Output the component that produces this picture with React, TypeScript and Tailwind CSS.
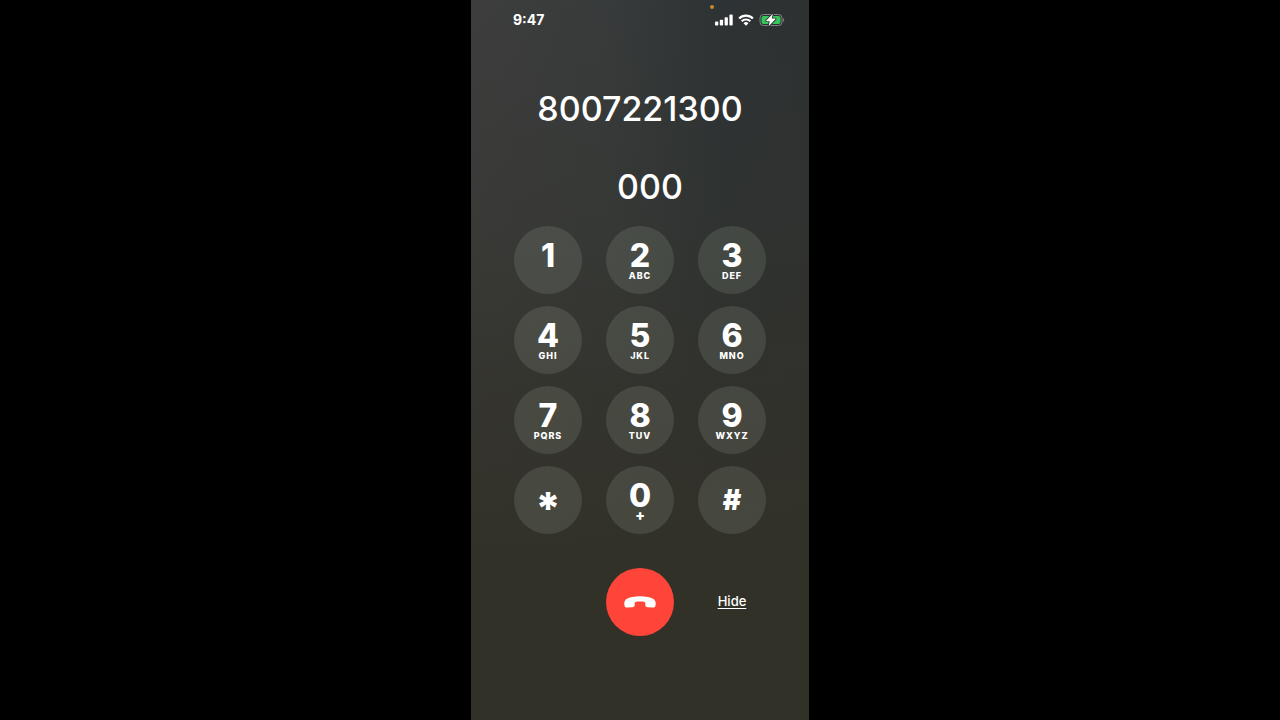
const keys = [
  { digit: "1", letters: "" },
  { digit: "2", letters: "ABC" },
  { digit: "3", letters: "DEF" },
  { digit: "4", letters: "GHI" },
  { digit: "5", letters: "JKL" },
  { digit: "6", letters: "MNO" },
  { digit: "7", letters: "PQRS" },
  { digit: "8", letters: "TUV" },
  { digit: "9", letters: "WXYZ" },
  { digit: "*", letters: "" },
  { digit: "0", letters: "+" },
  { digit: "#", letters: "" },
];

function SignalIcon() {
  return (
    <svg width="18" height="12" viewBox="0 0 18 12" fill="white" aria-hidden="true">
      <rect x="0" y="7.5" width="3.3" height="4" rx="0.9" />
      <rect x="4.8" y="5.7" width="3.3" height="5.8" rx="0.9" />
      <rect x="9.6" y="3.2" width="3.3" height="8.3" rx="0.9" />
      <rect x="14.4" y="0.5" width="3.3" height="11" rx="0.9" />
    </svg>
  );
}

function WifiIcon() {
  return (
    <svg width="16" height="12" viewBox="0 0 16 12" fill="none" stroke="white" aria-hidden="true">
      <path d="M1.1 4.5a9.8 9.8 0 0 1 13.800 0" strokeWidth="2.300" />
      <path d="M3.7 7.300a6.1 6.1 0 0 1 8.600 0" strokeWidth="2.100" />
      <path d="M8 11.700 5.500 9.200a3.500 3.500 0 0 1 5 0Z" fill="white" stroke="none" />
    </svg>
  );
}

function BatteryIcon() {
  return (
    <svg width="26" height="14" viewBox="0 0 26 14" aria-hidden="true">
      <rect x="1" y="1.5" width="22" height="11" rx="3.4" fill="none" stroke="#7d8180" />
      <rect x="2.5" y="3" width="19" height="8" rx="2" fill="#35c759" />
      <path d="M24 5.2v3.600c.8-.3 1.200-1 1.200-1.800s-.4-1.500-1.200-1.800Z" fill="#7d8180" />
      <path
        d="M13.900.8 7.300 7.500c-.3.3-.1.700.3.700h3.200L9.600 13.200l6.800-6.900c.3-.3.1-.7-.3-.7h-3.400Z"
        fill="white"
        stroke="#2f3335"
        strokeWidth="1.800"
        paintOrder="stroke"
      />
    </svg>
  );
}

function HangUpIcon() {
  return (
    <svg width="32" height="14" viewBox="0 0 32 14" fill="white" aria-hidden="true">
      <path d="M16 1.200c5.500 0 10.600.8 13.400 2.700 1.900 1.300 2.500 3.200 2.300 5.500-.2 2.200-1.200 3.300-3 3.200l-5-.4c-1.600-.1-2.300-.8-2.400-2.200l-.1-2.200c0-.5-.3-.7-.7-.8-1.300-.3-2.900-.4-4.500-.4s-3.200.1-4.500.4c-.4.1-.7.3-.7.800l-.1 2.200c-.1 1.400-.8 2.100-2.400 2.200l-5 .4c-1.800.1-2.800-1-3-3.200-.2-2.300.4-4.200 2.300-5.500C5.400 2 10.500 1.200 16 1.200Z" />
    </svg>
  );
}

export default function App() {
  return (
    <div className="flex min-h-screen justify-center bg-black font-['Inter',sans-serif] text-white">
      <main className="flex w-full max-w-[338px] flex-col bg-[linear-gradient(to_bottom,transparent_0%,#32332a50_30%,#32312ac0_55%,#323128_80%),linear-gradient(to_right,#3d3d3d_0%,#383b3b_40%,#2d3234_75%,#2e3132_100%)]">
        <header className="relative flex h-10 items-center justify-between pr-6 pl-[42px]">
          <time className="text-sm font-bold">9:47</time>
          <span className="absolute top-[5px] right-[95px] size-1 rounded-full bg-[#c98a2b]" />
          <div className="flex items-center gap-[5px]">
            <SignalIcon />
            <WifiIcon />
            <BatteryIcon />
          </div>
        </header>

        <h1 className="mt-[49px] text-center text-[34px] leading-10 font-medium">8007221300</h1>
        <output className="mt-[38px] pl-5 text-center text-[34px] leading-10 font-medium">000</output>

        <div className="mt-[19px] grid grid-cols-[repeat(3,68px)] justify-center gap-x-6 gap-y-3">
          {keys.map(({ digit, letters }) => (
            <button
              key={digit}
              type="button"
              className="flex size-[68px] flex-col items-center rounded-full bg-[#f0ffe8]/11 pt-3.5"
            >
              {digit === "*" ? (
                <span className="text-[44px] leading-[56px] font-extrabold">*</span>
              ) : digit === "#" ? (
                <span className="text-[28px] leading-10 font-black">#</span>
              ) : (
                <span className="text-[32px] leading-[31px] font-extrabold">{digit}</span>
              )}
              {letters === "+" ? (
                <span className="text-sm leading-2 font-black">+</span>
              ) : (
                letters && <span className="text-[9px] leading-2.5 font-extrabold tracking-widest">{letters}</span>
              )}
            </button>
          ))}
        </div>

        <div className="mt-[34px] grid grid-cols-[repeat(3,68px)] items-center justify-center gap-x-6">
          <button
            type="button"
            aria-label="End call"
            className="col-start-2 flex size-[68px] items-center justify-center rounded-full bg-[#ff453a]"
          >
            <HangUpIcon />
          </button>
          <button type="button" className="text-[13px] font-medium underline underline-offset-2">
            Hide
          </button>
        </div>
      </main>
    </div>
  );
}
